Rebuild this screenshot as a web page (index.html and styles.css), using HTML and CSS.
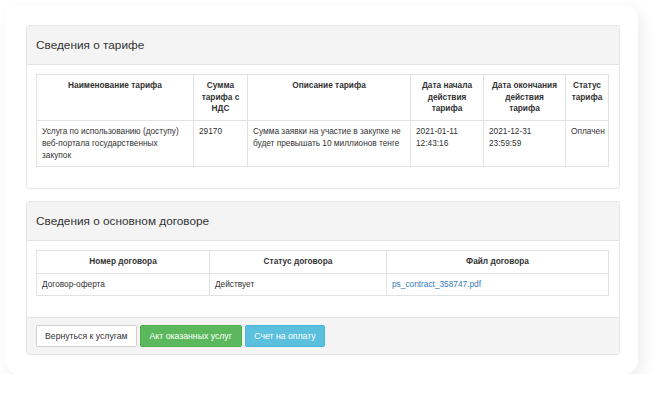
FILE: index.html
```html
<!DOCTYPE html>
<html lang="ru">
<head>
    <meta charset="UTF-8">
    <meta name="viewport" content="width=device-width, initial-scale=1.0">
    <title>Сведения о тарифе</title>
    <link rel="stylesheet" href="styles.css">
</head>
<body>

<div class="card">
    <div class="panel">
        <div class="panel-heading">Сведения о тарифе</div>
        <div class="panel-body">
            <table class="grid tariff">
                <colgroup>
                    <col style="width: 157px">
                    <col style="width: 54px">
                    <col style="width: 163px">
                    <col style="width: 73px">
                    <col style="width: 82px">
                    <col>
                </colgroup>
                <thead>
                    <tr>
                        <th>Наименование тарифа</th>
                        <th>Сумма тарифа с НДС</th>
                        <th>Описание тарифа</th>
                        <th>Дата начала действия тарифа</th>
                        <th>Дата окончания действия тарифа</th>
                        <th>Статус тарифа</th>
                    </tr>
                </thead>
                <tbody>
                    <tr>
                        <td>Услуга по использованию (доступу) веб-портала государственных закупок</td>
                        <td>29170</td>
                        <td>Сумма заявки на участие в закупке не будет превышать 10 миллионов тенге</td>
                        <td>2021-01-11 12:43:16</td>
                        <td>2021-12-31 23:59:59</td>
                        <td>Оплачен</td>
                    </tr>
                </tbody>
            </table>
        </div>
    </div>

    <div class="panel">
        <div class="panel-heading">Сведения о основном договоре</div>
        <div class="panel-body">
            <table class="grid contract">
                <colgroup>
                    <col style="width: 173px">
                    <col style="width: 177px">
                    <col>
                </colgroup>
                <thead>
                    <tr>
                        <th>Номер договора</th>
                        <th>Статус договора</th>
                        <th>Файл договора</th>
                    </tr>
                </thead>
                <tbody>
                    <tr>
                        <td>Договор-оферта</td>
                        <td>Действует</td>
                        <td><a href="#">ps_contract_358747.pdf</a></td>
                    </tr>
                </tbody>
            </table>
        </div>
        <div class="panel-footer">
            <button class="btn btn-default">Вернуться к услугам</button>
            <button class="btn btn-success">Акт оказанных услуг</button>
            <button class="btn btn-info">Счет на оплату</button>
        </div>
    </div>
</div>

</body>
</html>
```

FILE: styles.css
```css
body {
    font-family: "Liberation Sans", Arial, sans-serif;
    margin: 0;
    padding: 5px 0 0 5px;
    background-color: #fff;
    color: #333;
}
.card {
    width: 633px;
    box-sizing: border-box;
    padding: 20px 18px 19px 21px;
    background-color: #fff;
    border-radius: 14px;
    box-shadow: 4px 6px 16px rgba(0, 0, 0, 0.08);
}
.panel {
    border: 1px solid #e6e6e6;
    border-radius: 3px;
    background-color: #fff;
    margin-bottom: 12px;
}
.panel:last-child {
    margin-bottom: 0;
}
.panel-heading {
    height: 38px;
    line-height: 38px;
    padding: 0 9px;
    background-color: #f4f4f4;
    border-bottom: 1px solid #e3e3e3;
    font-size: 11.8px;
}
.panel-body {
    padding: 9px 10px 21px 9px;
}
.panel-footer {
    padding: 7px 9px 7px;
    background-color: #f4f4f4;
    border-top: 1px solid #e3e3e3;
    display: flex;
    gap: 3px;
}
.grid {
    width: 100%;
    border-collapse: collapse;
    table-layout: fixed;
    font-size: 8.3px;
    line-height: 11.7px;
}
.grid th, .grid td {
    border: 1px solid #e2e2e2;
    padding: 5px 5px;
    vertical-align: top;
}
.grid th {
    text-align: center;
    font-weight: bold;
}
.tariff th {
    height: 33px;
}
.tariff td {
    height: 35px;
}
.tariff td:nth-child(6) {
    text-align: center;
}
.contract th {
    padding: 5px 5px 5px;
}
.contract td {
    padding: 5px 5px 4px;
}
a {
    color: #337ab7;
    text-decoration: none;
}
.btn {
    font-family: inherit;
    font-size: 8.7px;
    height: 22px;
    padding: 0 8px;
    border-radius: 2px;
    border: 1px solid transparent;
    cursor: pointer;
}
.btn-default {
    background-color: #fff;
    border-color: #cfcfcf;
    color: #333;
}
.btn-success {
    padding: 0 9px;
    background-color: #5cb85c;
    border-color: #4cae4c;
    color: #fff;
}
.btn-info {
    padding: 0 8.5px;
    background-color: #5bc0de;
    border-color: #46b8da;
    color: #fff;
}
```
